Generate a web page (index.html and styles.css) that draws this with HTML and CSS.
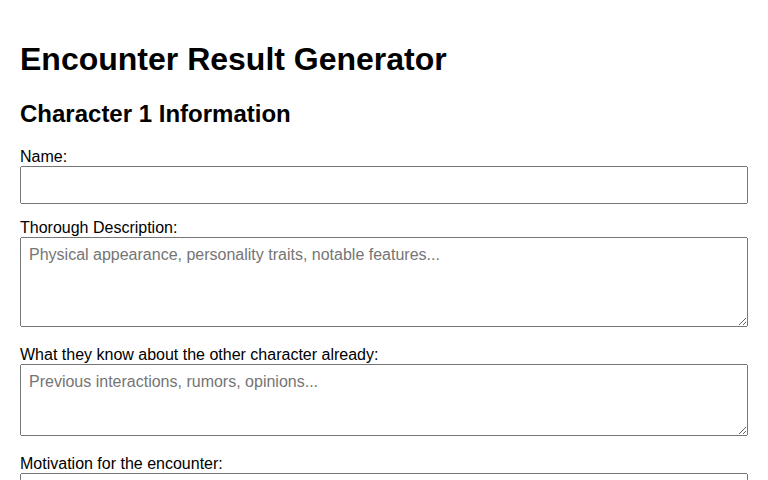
FILE: index.html
```html
<!DOCTYPE html>
<html lang="en">
<head>
    <meta charset="UTF-8">
    <meta name="viewport" content="width=device-width, initial-scale=1.0">
    <title>Encounter Result Generator</title>
    <link rel="stylesheet" href="styles.css">
</head>
<body>
    <h1>Encounter Result Generator</h1>

    <div class="character" id="character-1">
        <h2>Character 1 Information</h2>
        <div class="form-group">
            <label for="name1">Name:</label>
            <input type="text" id="name1">
        </div>
        <div class="form-group">
            <label for="desc1">Thorough Description:</label>
            <textarea id="desc1" rows="4" placeholder="Physical appearance, personality traits, notable features..."></textarea>
        </div>
        <div class="form-group">
            <label for="know1">What they know about the other character already:</label>
            <textarea id="know1" rows="3" placeholder="Previous interactions, rumors, opinions..."></textarea>
        </div>
        <div class="form-group">
            <label for="motive1">Motivation for the encounter:</label>
            <textarea id="motive1" rows="3"></textarea>
        </div>
    </div>
</body>
</html>
```

FILE: styles.css
```css
body {
    font-family: "Liberation Sans", Arial, sans-serif;
    margin: 0;
    padding: 20px;
}

.form-group {
    margin-bottom: 15px;
}

.form-group label {
    display: block;
}

.form-group input,
.form-group textarea {
    width: 100%;
    box-sizing: border-box;
    padding: 8px;
    font-family: inherit;
    font-size: 16px;
}

.form-group input {
    display: block;
}
```
